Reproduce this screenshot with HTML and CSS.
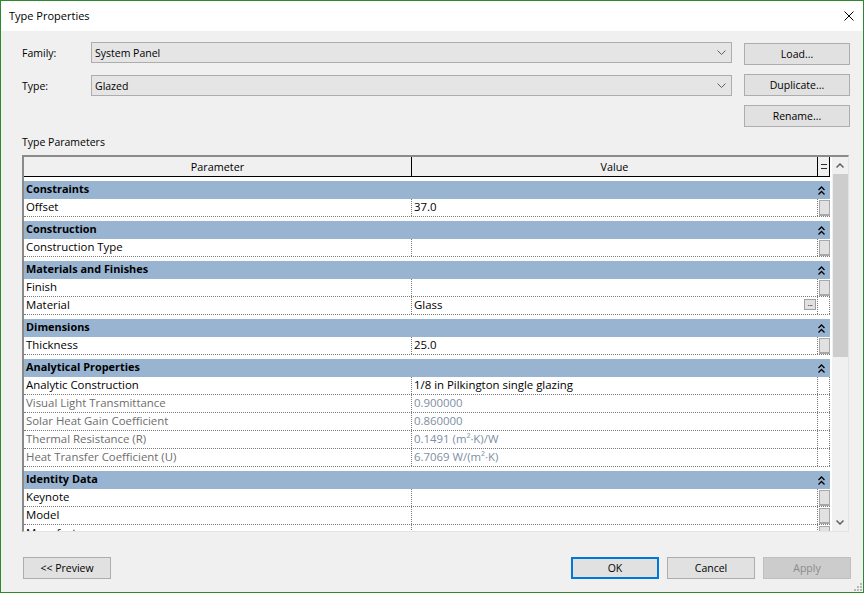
FILE: index.html
```html
<!DOCTYPE html>
<html>
<head>
<meta charset="utf-8">
<title>Type Properties</title>
<link rel="stylesheet" href="styles.css">
</head>
<body>
<div class="window">
  <div class="titlebar">
    <span class="title">Type Properties</span>
    <svg class="close" width="10" height="10" viewBox="0 0 10 10"><path d="M0.5 0.5L9.5 9.5M9.5 0.5L0.5 9.5" stroke="#000" stroke-width="1" fill="none"/></svg>
  </div>
  <div class="content">
    <div class="top">
      <div class="fields">
        <div class="field">
          <span class="label">Family:</span>
          <div class="combo"><span>System Panel</span><svg width="9" height="5" viewBox="0 0 9 5"><path d="M0.5 0.5L4.5 4.5L8.5 0.5" fill="none" stroke="#606060" stroke-width="1"/></svg></div>
        </div>
        <div class="field">
          <span class="label">Type:</span>
          <div class="combo"><span>Glazed</span><svg width="9" height="5" viewBox="0 0 9 5"><path d="M0.5 0.5L4.5 4.5L8.5 0.5" fill="none" stroke="#606060" stroke-width="1"/></svg></div>
        </div>
      </div>
      <div class="side">
        <div class="btn">Load...</div>
        <div class="btn">Duplicate...</div>
        <div class="btn">Rename...</div>
      </div>
    </div>
    <div class="section-label">Type Parameters</div>
    <div class="grid">
      <div class="table">
        <div class="thead">
          <div class="th">Parameter</div>
          <div class="th th-val">Value</div>
          <div class="th th-eq"><span class="eq"></span></div>
        </div>

        <div class="group"><span class="gname">Constraints</span><span class="gicon"><svg width="7" height="9" viewBox="0 0 7 9"><path d="M0.5 4L3.5 1L6.5 4M0.5 8.5L3.5 5.5L6.5 8.5" fill="none" stroke="#000" stroke-width="1.3"/></svg></span></div>
        <div class="row"><div class="cell">Offset</div><div class="cell val">37.0</div><div class="ext"><span class="mini"></span></div></div>

        <div class="group"><span class="gname">Construction</span><span class="gicon"><svg width="7" height="9" viewBox="0 0 7 9"><path d="M0.5 4L3.5 1L6.5 4M0.5 8.5L3.5 5.5L6.5 8.5" fill="none" stroke="#000" stroke-width="1.3"/></svg></span></div>
        <div class="row"><div class="cell">Construction Type</div><div class="cell val"></div><div class="ext"><span class="mini"></span></div></div>

        <div class="group"><span class="gname">Materials and Finishes</span><span class="gicon"><svg width="7" height="9" viewBox="0 0 7 9"><path d="M0.5 4L3.5 1L6.5 4M0.5 8.5L3.5 5.5L6.5 8.5" fill="none" stroke="#000" stroke-width="1.3"/></svg></span></div>
        <div class="row"><div class="cell">Finish</div><div class="cell val"></div><div class="ext"><span class="mini"></span></div></div>
        <div class="row"><div class="cell">Material</div><div class="cell val"><span>Glass</span><span class="dots">...</span></div><div class="ext empty"></div></div>

        <div class="group"><span class="gname">Dimensions</span><span class="gicon"><svg width="7" height="9" viewBox="0 0 7 9"><path d="M0.5 4L3.5 1L6.5 4M0.5 8.5L3.5 5.5L6.5 8.5" fill="none" stroke="#000" stroke-width="1.3"/></svg></span></div>
        <div class="row"><div class="cell">Thickness</div><div class="cell val">25.0</div><div class="ext"><span class="mini"></span></div></div>

        <div class="group"><span class="gname">Analytical Properties</span><span class="gicon"><svg width="7" height="9" viewBox="0 0 7 9"><path d="M0.5 4L3.5 1L6.5 4M0.5 8.5L3.5 5.5L6.5 8.5" fill="none" stroke="#000" stroke-width="1.3"/></svg></span></div>
        <div class="row"><div class="cell">Analytic Construction</div><div class="cell val">1/8 in Pilkington single glazing</div><div class="ext empty"></div></div>
        <div class="row disabled"><div class="cell">Visual Light Transmittance</div><div class="cell val">0.900000</div><div class="ext empty"></div></div>
        <div class="row disabled"><div class="cell">Solar Heat Gain Coefficient</div><div class="cell val">0.860000</div><div class="ext empty"></div></div>
        <div class="row disabled"><div class="cell">Thermal Resistance (R)</div><div class="cell val">0.1491 (m²·K)/W</div><div class="ext empty"></div></div>
        <div class="row disabled"><div class="cell">Heat Transfer Coefficient (U)</div><div class="cell val">6.7069 W/(m²·K)</div><div class="ext empty"></div></div>

        <div class="group"><span class="gname">Identity Data</span><span class="gicon"><svg width="7" height="9" viewBox="0 0 7 9"><path d="M0.5 4L3.5 1L6.5 4M0.5 8.5L3.5 5.5L6.5 8.5" fill="none" stroke="#000" stroke-width="1.3"/></svg></span></div>
        <div class="row"><div class="cell">Keynote</div><div class="cell val"></div><div class="ext"><span class="mini"></span></div></div>
        <div class="row"><div class="cell">Model</div><div class="cell val"></div><div class="ext"><span class="mini"></span></div></div>
        <div class="row"><div class="cell">Manufacturer</div><div class="cell val"></div><div class="ext"><span class="mini"></span></div></div>
      </div>
      <div class="scrollbar">
        <div class="arrow"><svg width="8" height="5" viewBox="0 0 8 5"><path d="M0.5 4.5L4 1L7.5 4.5" fill="none" stroke="#606060" stroke-width="1.5"/></svg></div>
        <div class="thumb"></div>
        <div class="arrow arrow-down"><svg width="8" height="5" viewBox="0 0 8 5"><path d="M0.5 0.5L4 4L7.5 0.5" fill="none" stroke="#606060" stroke-width="1.5"/></svg></div>
      </div>
    </div>
    <div class="footer">
      <div class="btn wide">&lt;&lt; Preview</div>
      <div class="footer-right">
        <div class="btn wide ok">OK</div>
        <div class="btn wide">Cancel</div>
        <div class="btn wide disabled-btn">Apply</div>
      </div>
    </div>
  </div>
  <svg class="grip" width="9" height="9" viewBox="0 0 9 9">
    <rect x="7" y="1" width="2" height="2" fill="#b8b8b8"/>
    <rect x="4" y="4" width="2" height="2" fill="#b8b8b8"/>
    <rect x="7" y="4" width="2" height="2" fill="#b8b8b8"/>
    <rect x="1" y="7" width="2" height="2" fill="#b8b8b8"/>
    <rect x="4" y="7" width="2" height="2" fill="#b8b8b8"/>
    <rect x="7" y="7" width="2" height="2" fill="#b8b8b8"/>
  </svg>
</div>
</body>
</html>
```

FILE: styles.css
```css
* { box-sizing: border-box; }

body {
  margin: 0;
  background: #ffffff;
  font-family: "Open Sans", "Noto Sans", sans-serif;
  font-size: 10.5px;
  color: #000000;
}

.window {
  position: relative;
  width: 864px;
  height: 593px;
  border: 1px solid #2b8a2b;
  background: #f0f0f0;
  display: flex;
  flex-direction: column;
}

.titlebar {
  flex: none;
  height: 30px;
  background: #ffffff;
  display: flex;
  align-items: center;
  justify-content: space-between;
  padding: 0 9px 0 8px;
}

.title {
  font-size: 11px;
  line-height: 16px;
}

.content {
  padding: 0 12px 0 21px;
  display: flex;
  flex-direction: column;
}

.top {
  display: flex;
  margin-top: 11px;
  gap: 12px;
}

.fields {
  display: flex;
  flex-direction: column;
  gap: 12px;
}

.field {
  display: flex;
  align-items: center;
  height: 21px;
}

.label { width: 69px; }

.combo {
  width: 641px;
  height: 21px;
  border: 1px solid #adadad;
  background: #e5e5e5;
  display: flex;
  align-items: center;
  justify-content: space-between;
  padding: 0 5px 0 3px;
}

.side {
  display: flex;
  flex-direction: column;
  gap: 9px;
  margin-top: 1px;
  width: 106px;
}

.btn {
  height: 22px;
  border: 1px solid #adadad;
  background: #e1e1e1;
  display: flex;
  align-items: center;
  justify-content: center;
}

.section-label {
  margin-top: 7px;
  line-height: 16px;
  margin-bottom: 5px;
}

.grid {
  width: 827px;
  height: 377px;
  border-style: solid;
  border-width: 2px 1px 1px 2px;
  border-color: #8a8a8a #e3e3e3 #e3e3e3 #8a8a8a;
  background: #ffffff;
  display: flex;
  gap: 2px;
}

.table {
  width: 806px;
  height: 374px;
  overflow: hidden;
  flex: none;
  font-size: 11.4px;
}

.thead {
  display: grid;
  grid-template-columns: 387px 406px 13px;
  height: 20px;
  border-bottom: 1px solid #000000;
  background: #f0f0f0;
  font-size: 10.8px;
}

.th {
  display: flex;
  align-items: center;
  justify-content: center;
}

.th-val { border-left: 1px solid #000000; }

.th-eq {
  border-left: 1px solid #000000;
  border-right: 1px solid #000000;
}

.eq {
  width: 6px;
  height: 5px;
  border-top: 1px solid #2a2a2a;
  border-bottom: 1px solid #2a2a2a;
}

.group {
  margin-top: 4px;
  height: 18px;
  background: #99b4d1;
  display: grid;
  grid-template-columns: 793px 13px;
  align-items: start;
  font-weight: bold;
  font-size: 10.9px;
}

.gname { padding-left: 2px; line-height: 16px; }

.gicon {
  display: flex;
  align-items: center;
  padding-left: 1px;
  height: 18px;
}

.row {
  display: grid;
  grid-template-columns: 387px 406px 13px;
  height: 18px;
  border-bottom: 1px dotted #7a7a7a;
}

.cell {
  padding-left: 2px;
  line-height: 16px;
  white-space: nowrap;
  overflow: hidden;
}

.val {
  border-left: 1px dotted #7a7a7a;
  padding-left: 2px;
  display: flex;
  align-items: flex-start;
  justify-content: space-between;
}

.dots {
  width: 12px;
  height: 11px;
  margin-top: 2px;
  margin-right: 1px;
  border: 1px solid #a0a0a0;
  background: #e1e1e1;
  font-size: 8px;
  line-height: 6px;
  text-align: center;
  letter-spacing: -0.5px;
}

.ext {
  border-left: 1px dotted #7a7a7a;
  display: flex;
  padding: 1px 0 0 1px;
}

.ext.empty { border-right: 1px dotted #7a7a7a; }

.mini {
  width: 11px;
  height: 16px;
  border: 1px solid #a8a8a8;
  border-bottom-width: 2px;
  background: #e1e1e1;
}

.disabled .cell { color: #6d6d6d; }
.disabled .val { color: #7e8ea3; }

.scrollbar {
  width: 16px;
  flex: none;
  background: #f0f0f0;
  display: flex;
  flex-direction: column;
}

.arrow {
  height: 17px;
  display: flex;
  align-items: center;
  justify-content: center;
}

.arrow-down { margin-top: auto; }

.thumb {
  height: 183px;
  margin-left: 1px;
  background: #cdcdcd;
}

.footer {
  margin-top: 25px;
  display: flex;
  justify-content: space-between;
  padding-left: 1px;
}

.footer-right {
  display: flex;
  gap: 8px;
}

.wide { width: 88px; }

.ok { border: 2px solid #0078d7; }

.disabled-btn {
  background: #cccccc;
  border-color: #bfbfbf;
  color: #8b8b8b;
}

.grip {
  position: absolute;
  right: 1px;
  bottom: 1px;
}
```
